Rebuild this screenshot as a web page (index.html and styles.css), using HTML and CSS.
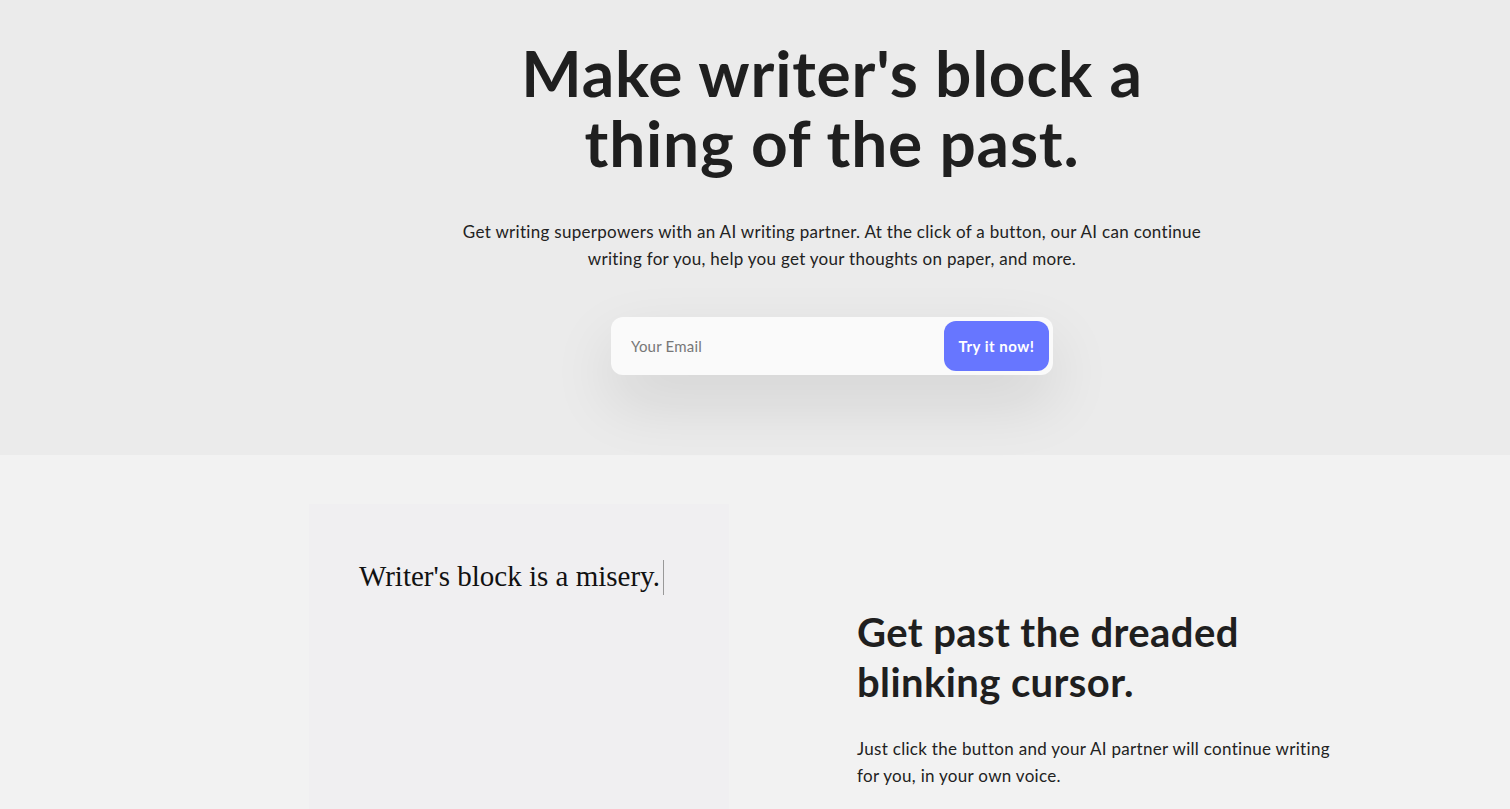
FILE: index.html
```html
<!DOCTYPE html>
<html lang="en">
<head>
    <meta charset="UTF-8">
    <meta name="viewport" content="width=device-width, initial-scale=1.0">
    <title>AI Writing Partner</title>
    <link rel="stylesheet" href="styles.css">
</head>
<body>
    <section class="hero">
        <div class="hero-inner">
            <h1>Make writer's block a thing of the past.</h1>
            <p class="hero-text">Get writing superpowers with an AI writing partner. At the click of a button, our AI can continue writing for you, help you get your thoughts on paper, and more.</p>

            <form class="signup" onsubmit="return false;">
                <input type="email" class="signup-input" placeholder="Your Email">
                <button type="submit" class="signup-btn">Try it now!</button>
            </form>
        </div>
    </section>

    <section class="feature">
        <div class="feature-inner">
            <div class="editor">
                <p class="editor-text">Writer's block is a misery.<span class="caret"></span></p>
            </div>
            <div class="feature-copy">
                <h2>Get past the dreaded blinking cursor.</h2>
                <p>Just click the button and your AI partner will continue writing for you, in your own voice.</p>
            </div>
        </div>
    </section>
</body>
</html>
```

FILE: styles.css
```css
body {
    margin: 0;
    font-family: Lato, "Noto Sans", sans-serif;
    color: #1f1f1f;
    background-color: #f2f2f2;
}

.hero {
    background-color: #ebebeb;
    height: 455px;
    padding-left: 154px;
    box-sizing: border-box;
}

.hero-inner {
    display: flex;
    flex-direction: column;
    align-items: center;
    text-align: center;
    padding-top: 38px;
}

.hero h1 {
    margin: 0;
    width: 720px;
    font-size: 64px;
    line-height: 70px;
    font-weight: 700;
    letter-spacing: 0.8px;
}

.hero-text {
    margin: 40px 0 0;
    width: 760px;
    font-size: 17px;
    line-height: 27px;
    letter-spacing: 0.3px;
    color: #222;
}

.signup {
    margin-top: 45px;
    width: 442px;
    height: 58px;
    box-sizing: border-box;
    padding: 4px;
    display: flex;
    align-items: stretch;
    background-color: #fafafa;
    border-radius: 12px;
    box-shadow: 0 26px 64px rgba(0, 0, 0, 0.11);
}

.signup-input {
    flex: 1;
    border: none;
    background: transparent;
    padding: 0 16px;
    font-family: inherit;
    font-size: 15px;
    letter-spacing: 0.2px;
    color: #333;
    outline: none;
}

.signup-input::placeholder {
    color: #777;
}

.signup-btn {
    width: 105px;
    border: none;
    border-radius: 12px;
    background-color: #6776ff;
    color: white;
    font-family: inherit;
    font-size: 15px;
    font-weight: 700;
    letter-spacing: 0.5px;
    cursor: pointer;
}

.feature {
    padding-left: 154px;
    padding-top: 49px;
}

.feature-inner {
    width: 1046px;
    margin: 0 auto;
    display: grid;
    grid-template-columns: 420px 1fr;
    gap: 128px;
}

.editor {
    background-color: #f0eff1;
    height: 400px;
    padding: 52px 50px;
    box-sizing: border-box;
}

.editor-text {
    margin: 0;
    font-family: "Liberation Serif", serif;
    font-size: 29px;
    line-height: 40px;
    color: #111;
}

.caret {
    display: inline-block;
    width: 1px;
    height: 35px;
    margin-left: 3px;
    vertical-align: -9px;
    background-color: #999;
}

.feature-copy {
    padding-top: 103px;
}

.feature-copy h2 {
    margin: 0;
    font-size: 40px;
    line-height: 50px;
    font-weight: 700;
    letter-spacing: 0.4px;
}

.feature-copy p {
    margin: 28px 0 0;
    font-size: 17px;
    line-height: 27px;
    letter-spacing: 0.3px;
    color: #222;
}
```
